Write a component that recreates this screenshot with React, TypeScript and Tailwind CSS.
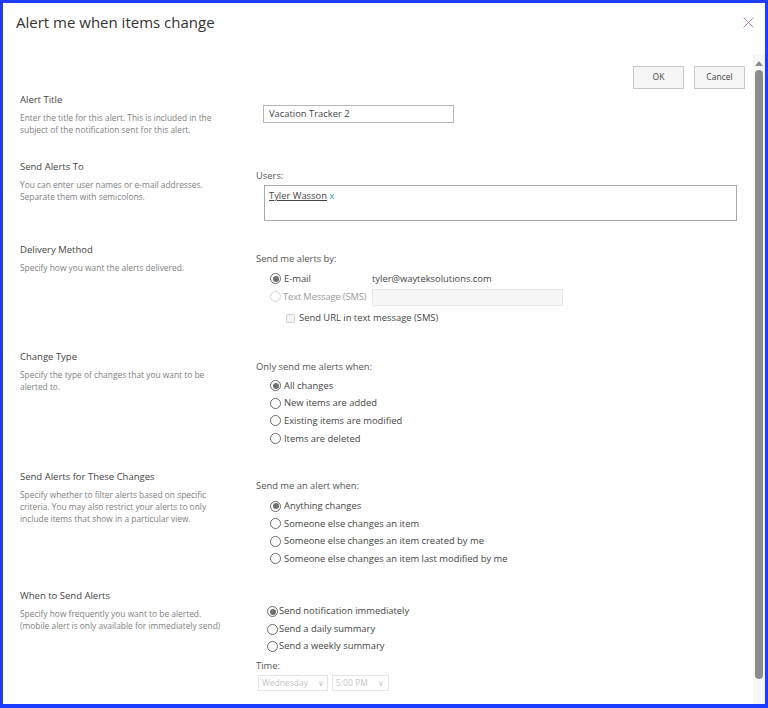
import type { ReactNode } from "react";

function Radio({ checked = false, disabled = false }: { checked?: boolean; disabled?: boolean }) {
  return (
    <span
      className={
        "w-[11px] h-[11px] shrink-0 rounded-full border flex items-center justify-center bg-white " +
        (disabled ? "border-[#d6d6d6]" : "border-[#6a6a6a]")
      }
    >
      {checked && <span className="w-[6px] h-[6px] rounded-full bg-[#6f6f6f]" />}
    </span>
  );
}

function Option({ label, checked, className = "" }: { label: string; checked?: boolean; className?: string }) {
  return (
    <div className={"h-[17.6px] flex items-center gap-[3px] " + className}>
      <Radio checked={checked} />
      <span className="whitespace-nowrap">{label}</span>
    </div>
  );
}

function Section({ title, desc, children, className = "" }: { title: string; desc: ReactNode; children: ReactNode; className?: string }) {
  return (
    <div className={"flex " + className}>
      <div className="w-[236px] shrink-0">
        <div className="text-[9.5px] leading-[12px] text-[#444] whitespace-nowrap">{title}</div>
        <div className="mt-[6px] text-[8.4px] leading-[12px] text-[#808080] whitespace-nowrap">{desc}</div>
      </div>
      <div className="flex-1 text-[9.4px] text-[#444]">{children}</div>
    </div>
  );
}

export default function App() {
  return (
    <div
      className="w-[768px] h-[708px] border-t-[3px] border-l-[3px] border-r-[3px] border-b-[4px] border-[#1c3cff] bg-white flex flex-col overflow-hidden"
      style={{ fontFamily: '"Open Sans", "Noto Sans", sans-serif' }}
    >
      {/* header */}
      <div className="h-[51px] shrink-0 flex items-start justify-between pl-[13px] pr-[11px] pt-[9px]">
        <h1 className="text-[15px] leading-[20px] text-[#333]">Alert me when items change</h1>
        <svg width="11" height="11" viewBox="0 0 11 11" className="mt-[5px]">
          <path d="M0.5 0.5 L10.5 10.5 M10.5 0.5 L0.5 10.5" stroke="#b27fb6" strokeWidth="1" />
        </svg>
      </div>

      <div className="flex-1 flex min-h-0">
        {/* scrolling content */}
        <div className="flex-1 overflow-hidden pl-[17px] pr-[8px] pt-[12px]">
          <div className="flex justify-end gap-[10px]">
            <button className="w-[51px] h-[23px] border border-[#c8c8c8] bg-[#f5f5f5] text-[8.5px] text-[#444]">OK</button>
            <button className="w-[51px] h-[23px] border border-[#c8c8c8] bg-[#f5f5f5] text-[8.5px] text-[#444]">Cancel</button>
          </div>

          <Section
            className="mt-[5px]"
            title="Alert Title"
            desc={<>Enter the title for this alert. This is included in the<br />subject of the notification sent for this alert.</>}
          >
            <div className="pt-[11px] pl-[7px]">
              <div className="w-[191px] h-[18px] border border-[#b5b5b5] flex items-center pl-[5px] text-[9.4px] text-[#444]">
                Vacation Tracker 2
              </div>
            </div>
          </Section>

          <Section
            className="mt-[25px]"
            title="Send Alerts To"
            desc={<>You can enter user names or e-mail addresses.<br />Separate them with semicolons.</>}
          >
            <div className="pt-[9px]">
              <div className="leading-[12px] text-[#555]">Users:</div>
              <div className="mt-[3px] ml-[8px] mr-[8px] h-[36px] border border-[#a9a9a9] pl-[4px] pt-[3px]">
                <span className="underline text-[#444]">Tyler Wasson</span>{" "}
                <span className="text-[#2a9cb0]">x</span>
              </div>
            </div>
          </Section>

          <Section
            className="mt-[23px]"
            title="Delivery Method"
            desc="Specify how you want the alerts delivered."
          >
            <div className="pt-[9px]">
              <div className="leading-[12px] text-[#555]">Send me alerts by:</div>
              <div className="mt-[5px] ml-[14px] h-[18px] flex items-center">
                <div className="w-[102px] flex items-center gap-[3px]">
                  <Radio checked />
                  <span>E-mail</span>
                </div>
                <span>tyler@wayteksolutions.com</span>
              </div>
              <div className="ml-[14px] h-[18px] flex items-center">
                <div className="w-[102px] flex items-center gap-[2px] text-[#9a9a9a]">
                  <Radio disabled />
                  <span className="whitespace-nowrap tracking-[-0.15px]">Text Message (SMS)</span>
                </div>
                <div className="w-[191px] h-[17px] border border-[#e6e6e6] bg-[#f7f7f7]" />
              </div>
              <div className="mt-[3px] ml-[30px] h-[18px] flex items-center gap-[4px]">
                <span className="w-[9px] h-[9px] border border-[#d0d0d0] bg-[#f4f4f4] rounded-[1px]" />
                <span>Send URL in text message (SMS)</span>
              </div>
            </div>
          </Section>

          <Section
            className="mt-[24px]"
            title="Change Type"
            desc={<>Specify the type of changes that you want to be<br />alerted to.</>}
          >
            <div className="pt-[10px]">
              <div className="leading-[12px] text-[#555]">Only send me alerts when:</div>
              <div className="mt-[4px] ml-[14px]">
                <Option label="All changes" checked />
                <Option label="New items are added" />
                <Option label="Existing items are modified" />
                <Option label="Items are deleted" />
              </div>
            </div>
          </Section>

          <Section
            className="mt-[24px]"
            title="Send Alerts for These Changes"
            desc={<>Specify whether to filter alerts based on specific<br />criteria. You may also restrict your alerts to only<br />include items that show in a particular view.</>}
          >
            <div className="pt-[9px]">
              <div className="leading-[12px] text-[#555]">Send me an alert when:</div>
              <div className="mt-[5px] ml-[14px]">
                <Option label="Anything changes" checked />
                <Option label="Someone else changes an item" />
                <Option label="Someone else changes an item created by me" />
                <Option label="Someone else changes an item last modified by me" />
              </div>
            </div>
          </Section>

          <Section
            className="mt-[22px]"
            title="When to Send Alerts"
            desc={<>Specify how frequently you want to be alerted.<br />(mobile alert is only available for immediately send)</>}
          >
            <div className="pt-[13px]">
              <div className="ml-[11px]">
                <Option label="Send notification immediately" checked className="!gap-[1px] !h-[17.5px]" />
                <Option label="Send a daily summary" className="!gap-[1px] !h-[17.5px]" />
                <Option label="Send a weekly summary" className="!gap-[1px] !h-[17.5px]" />
              </div>
              <div className="mt-[5px] leading-[12px] text-[#555]">Time:</div>
              <div className="mt-[3px] ml-[2px] flex gap-[4px] text-[8.5px] text-[#c4c4c4]">
                <div className="w-[70px] h-[16px] border border-[#e4e4e4] flex items-center justify-between pl-[3px] pr-[3px]">
                  <span>Wednesday</span>
                  <span className="text-[8px]">&#x2228;</span>
                </div>
                <div className="w-[57px] h-[16px] border border-[#e4e4e4] flex items-center justify-between pl-[3px] pr-[4px]">
                  <span>5:00 PM</span>
                  <span className="text-[8px]">&#x2228;</span>
                </div>
              </div>
            </div>
          </Section>
        </div>

        {/* scrollbar */}
        <div className="w-[12px] shrink-0 bg-[#f7f7f7] flex flex-col items-center pt-[7px] pb-[25px]">
          <svg width="8" height="5" viewBox="0 0 8 5">
            <path d="M4 0 L8 5 L0 5 Z" fill="#8a8a8a" />
          </svg>
          <div className="mt-[4px] w-[8px] flex-1 rounded-full bg-[#8c8c8c]" />
        </div>
      </div>
    </div>
  );
}
